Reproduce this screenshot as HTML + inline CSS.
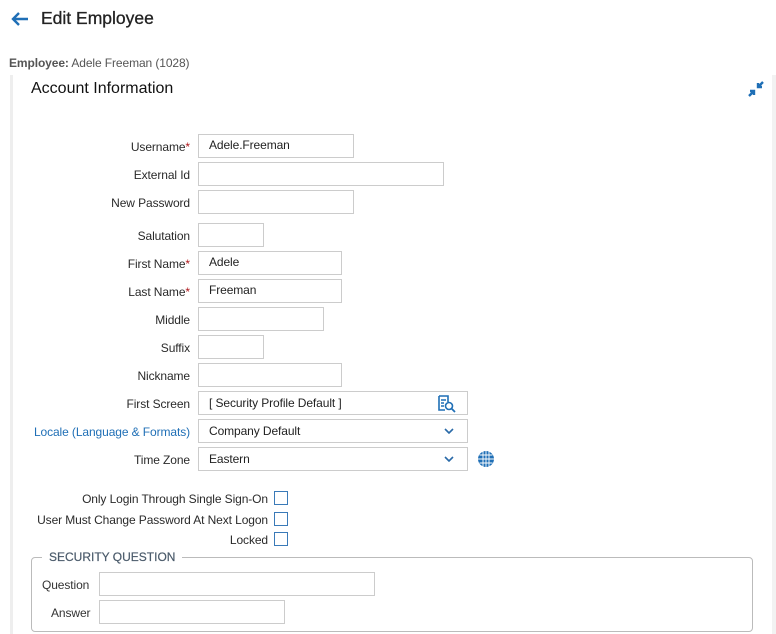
<!DOCTYPE html>
<html><head><style>
body{margin:0;width:776px;height:634px;overflow:hidden;background:#fff;font-family:"Liberation Sans",sans-serif;color:#333;position:relative}
.a{position:absolute}
.l{position:absolute;right:586px;font-size:12px;color:#2a2a2a;text-align:right;white-space:nowrap;letter-spacing:-0.1px;top:0}
.i{position:absolute;left:198px;height:22px;border:1px solid #ccc;box-sizing:border-box;font-size:12px;line-height:21px;padding-left:10px;color:#222;letter-spacing:-0.1px}
.r{color:#b0181d}
.cb{position:absolute;left:274px;width:14px;height:14px;border:1px solid #3a7ab8;box-sizing:border-box}
.chev{position:absolute;right:13px;top:8px}
</style></head><body>
<svg class="a" style="left:10px;top:10px" width="20" height="18" viewBox="0 0 20 18"><path d="M18 9H3M9 3L3 9l6 6" stroke="#1f6fb6" stroke-width="2.4" fill="none"/></svg>
<div class="a" style="left:41px;top:8px;font-size:17.5px;color:#222;-webkit-text-stroke:0.3px #222">Edit Employee</div>
<div class="a" style="left:9px;top:56px;font-size:12px;color:#555;letter-spacing:-0.1px"><b>Employee:</b> Adele Freeman (1028)</div>
<div class="a" style="left:10px;top:75px;width:3px;height:559px;background:#eee"></div>
<div class="a" style="left:772px;top:75px;width:4px;height:559px;background:#f2f2f2"></div>
<div class="a" style="left:31px;top:80px;font-size:16px;color:#111">Account Information</div>
<svg class="a" style="left:748px;top:81px" width="16" height="16" viewBox="0 0 16 16"><path d="M15 1L10 6M10 2v4h4M1 15l5-5M6 14v-4H2" stroke="#1f6fb6" stroke-width="2.4" fill="none"/></svg>

<div class="l" style="top:140px">Username<span class="r">*</span></div><div class="i" style="top:134px;width:156px;height:24px">Adele.Freeman</div>
<div class="l" style="top:168px">External Id</div><div class="i" style="top:162px;width:246px;height:24px"></div>
<div class="l" style="top:196px">New Password</div><div class="i" style="top:190px;width:156px;height:24px"></div>
<div class="l" style="top:229px">Salutation</div><div class="i" style="top:223px;width:66px;height:24px"></div>
<div class="l" style="top:257px">First Name<span class="r">*</span></div><div class="i" style="top:251px;width:144px;height:24px">Adele</div>
<div class="l" style="top:285px">Last Name<span class="r">*</span></div><div class="i" style="top:279px;width:144px;height:24px">Freeman</div>
<div class="l" style="top:313px">Middle</div><div class="i" style="top:307px;width:126px;height:24px"></div>
<div class="l" style="top:341px">Suffix</div><div class="i" style="top:335px;width:66px;height:24px"></div>
<div class="l" style="top:369px">Nickname</div><div class="i" style="top:363px;width:144px;height:24px"></div>
<div class="l" style="top:397px">First Screen</div><div class="i" style="top:391px;width:270px;height:24px;line-height:22px">[ Security Profile Default ]
<svg class="a" style="right:11px;top:3px" width="19" height="18" viewBox="0 0 19 18"><path d="M2 1h9v6M2 1v14h6M4 5h5M4 8h3M4 11h3" stroke="#1f6fb6" stroke-width="1.6" fill="none"/><circle cx="12" cy="11" r="3.5" stroke="#1f6fb6" stroke-width="1.6" fill="none"/><path d="M14.5 13.5L18 17" stroke="#1f6fb6" stroke-width="1.8"/></svg></div>
<div class="l" style="top:425px;color:#1f6fb6">Locale (Language &amp; Formats)</div><div class="i" style="top:419px;width:270px;height:24px;line-height:22px">Company Default<svg class="chev" width="10" height="6" viewBox="0 0 10 6"><path d="M1 1l4 4 4-4" stroke="#2a6aa8" stroke-width="1.6" fill="none"/></svg></div>
<div class="l" style="top:453px">Time Zone</div><div class="i" style="top:447px;width:270px;height:24px;line-height:22px">Eastern<svg class="chev" width="10" height="6" viewBox="0 0 10 6"><path d="M1 1l4 4 4-4" stroke="#2a6aa8" stroke-width="1.6" fill="none"/></svg></div>
<svg class="a" style="left:477px;top:450px" width="18" height="18" viewBox="0 0 18 18"><circle cx="9" cy="9" r="8" fill="#1f6fb6"/><path d="M1 9h16M9 1v16M2.5 5h13M2.5 13h13M6 1.5v15M12 1.5v15" stroke="#fff" stroke-width="0.9"/></svg>

<div class="l" style="top:492px;right:508px">Only Login Through Single Sign-On</div><div class="cb" style="top:491px"></div>
<div class="l" style="top:513px;right:508px">User Must Change Password At Next Logon</div><div class="cb" style="top:512px"></div>
<div class="l" style="top:533px;right:508px">Locked</div><div class="cb" style="top:532px"></div>

<div class="a" style="left:31px;top:557px;width:722px;height:75px;border:1px solid #bbb;border-radius:4px;box-sizing:border-box"></div>
<div class="a" style="left:42px;top:550px;padding:0 7px;background:#fff;font-size:12px;color:#4a5a6a;-webkit-text-stroke:0.2px #4a5a6a">SECURITY QUESTION</div>
<div class="a" style="left:42px;top:578px;font-size:12px;letter-spacing:-0.1px">Question</div><div class="i" style="left:99px;top:572px;width:276px;height:24px"></div>
<div class="a" style="left:51px;top:606px;font-size:12px;letter-spacing:-0.1px">Answer</div><div class="i" style="left:99px;top:600px;width:186px;height:24px"></div>
</body></html>
